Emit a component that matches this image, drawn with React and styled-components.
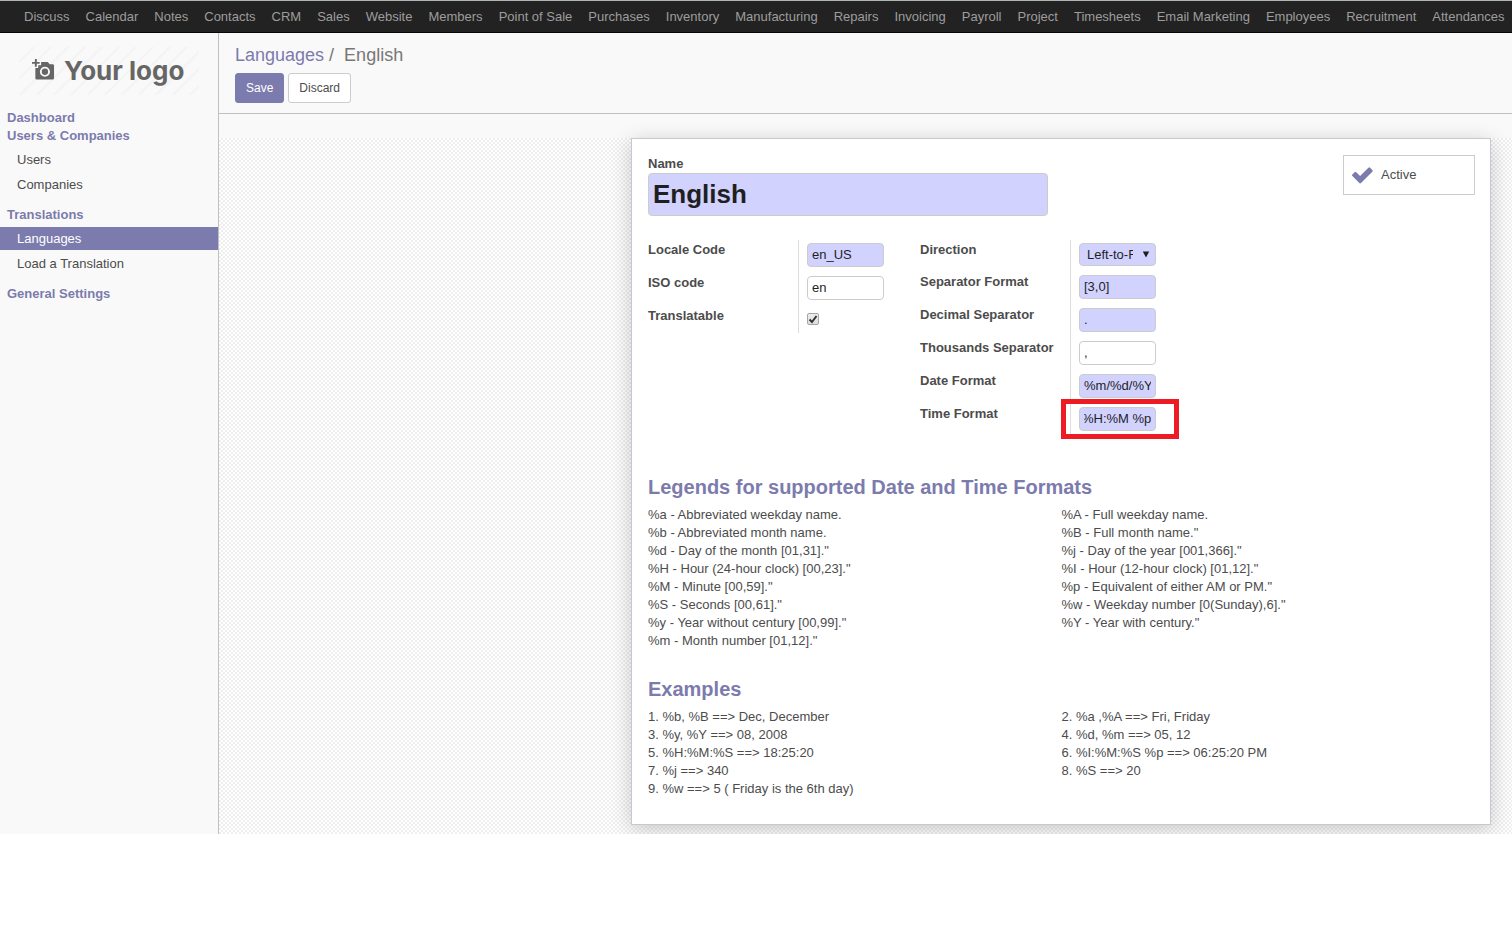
import { useEffect, useRef } from "react";
import styled, { createGlobalStyle } from "styled-components";

const GlobalStyle = createGlobalStyle`
  * {
    box-sizing: border-box;
  }
  body {
    margin: 0;
    background-color: white;
    color: #4c4c4c;
    font-family: "Liberation Sans", Arial, sans-serif;
    font-size: 13px;
    line-height: 18px;
  }
  input, select, button {
    font-family: inherit;
    font-size: 13px;
  }
  a {
    text-decoration: none;
  }
`;

const Navbar = styled.nav`
  display: flex;
  gap: 16px;
  height: 33px;
  padding: 7px 0 0 24px;
  overflow: hidden;
  border-top: 1px solid #afb5b2;
  border-bottom: 1px solid #080808;
  background-color: #222222;
`;

const NavLink = styled.a`
  color: #9d9d9d;
  white-space: nowrap;
`;

const Page = styled.div`
  display: flex;
  overflow: hidden;
  background-color: #f9f9f9;
`;

const Sidebar = styled.aside`
  flex: 0 0 219px;
  border-right: 1px solid #c0c0c0;
`;

const Logo = styled.a`
  display: flex;
  align-items: center;
  gap: 9px;
  width: 180px;
  height: 48px;
  margin: 14px 0 14px 19px;
  padding-left: 13px;
  color: #666666;
  background: repeating-linear-gradient(
    135deg,
    #f9f9f9 0px,
    #f9f9f9 9px,
    #f4f4f4 10px,
    #f4f4f4 12px
  );

  & > svg {
    margin-bottom: 2px;
  }
`;

const LogoText = styled.span`
  font-family: Inter, sans-serif;
  font-size: 26px;
  font-weight: bold;
  line-height: 32px;
  white-space: nowrap;
`;

const MenuTitle = styled.a`
  display: block;
  padding-left: 7px;
  color: #7c7bad;
  font-weight: bold;
`;

const MenuList = styled.ul`
  display: flex;
  flex-direction: column;
  gap: 2px;
  margin: 3px 0 10px;
  padding: 0;
  list-style: none;
`;

const MenuLink = styled.a`
  display: block;
  padding: 3px 0 2px 17px;
  color: ${(props) => (props.$active ? "white" : "#4c4c4c")};
  background-color: ${(props) => (props.$active ? "#7c7bad" : "transparent")};
`;

const Main = styled.main`
  flex: 1;
  min-width: 0;
`;

const ControlPanel = styled.header`
  padding: 11px 16px 10px;
  border-bottom: 1px solid #c0c0c0;
`;

const Breadcrumb = styled.div`
  display: flex;
  gap: 5px;
  margin-bottom: 7px;
  color: #777777;
  font-size: 18px;
  line-height: 22px;
`;

const Crumb = styled.a`
  color: #7c7bad;
`;

const CrumbCurrent = styled.span`
  padding-left: 5px;
`;

const Buttons = styled.div`
  display: flex;
  gap: 4px;
`;

const Button = styled.button`
  height: 30px;
  padding: 0 10px;
  border: 1px solid ${(props) => (props.$primary ? "#7c7bad" : "#cccccc")};
  border-radius: 3px;
  color: ${(props) => (props.$primary ? "white" : "#4c4c4c")};
  background-color: ${(props) => (props.$primary ? "#7c7bad" : "white")};
  font-size: 12px;
`;

const SheetArea = styled.div`
  display: flex;
  justify-content: flex-end;
  margin-top: 24px;
  padding: 0 21px 9px;
  background: repeating-conic-gradient(#eeeeee 0% 25%, white 0% 50%) 0 0 / 4px 4px;
`;

const Sheet = styled.form`
  width: 860px;
  padding: 16px 15px 26px 16px;
  border: 1px solid #c8c8d3;
  background-color: white;
  box-shadow: 0 4px 20px rgba(0, 0, 0, 0.2);
`;

const SheetHead = styled.div`
  display: flex;
  justify-content: space-between;
  align-items: flex-start;
  margin-bottom: 24px;
`;

const Label = styled.label`
  display: block;
  font-weight: bold;
`;

const Input = styled.input`
  display: block;
  width: 77px;
  height: 24px;
  padding: 0 4px 2px;
  border: 1px solid #cccccc;
  border-radius: 4px;
  color: #1f1f1f;
  background-color: ${(props) => (props.required ? "#d2d2ff" : "white")};
`;

const NameInput = styled(Input)`
  width: 400px;
  height: 43px;
  padding: 0 4px;
  font-size: 26px;
  font-weight: bold;
`;

const StatButton = styled.button`
  display: flex;
  align-items: center;
  gap: 8px;
  width: 132px;
  height: 40px;
  padding: 0 8px;
  border: 1px solid #cccccc;
  color: #4c4c4c;
  background-color: white;
`;

const StatText = styled.span`
  padding-bottom: 2px;
`;

const Groups = styled.div`
  display: flex;
  align-items: flex-start;
  gap: 36px;
  margin-bottom: 42px;
`;

const Group = styled.div`
  width: 236px;
`;

const Field = styled.div`
  display: grid;
  grid-template-columns: 150px 1fr;
  height: ${(props) => props.$height || 33}px;

  & > ${Label} {
    padding-top: 1px;
  }
`;

const Cell = styled.div`
  position: relative;
  padding: 3px 0 0 8px;
  border-left: 1px solid #dddddd;
`;

const SelectBox = styled.div`
  display: grid;
  width: 77px;
  align-items: center;

  & > * {
    grid-area: 1 / 1;
  }
  & > svg {
    justify-self: end;
    margin-right: 6px;
    pointer-events: none;
  }
`;

const Select = styled.select`
  appearance: none;
  width: 77px;
  height: 23px;
  padding: 0 22px 1px 7px;
  border: 1px solid #cccccc;
  border-radius: 4px;
  color: #1f1f1f;
  background-color: #d2d2ff;
`;

const CheckBox = styled.div`
  display: grid;
  width: 12px;
  padding-top: 4px;

  & > * {
    grid-area: 1 / 1;
  }
  & > svg {
    pointer-events: none;
  }
`;

const Checkbox = styled.input`
  appearance: none;
  width: 12px;
  height: 12px;
  margin: 0;
  border: 1px solid #a6a6a6;
  border-radius: 2px;
  background: linear-gradient(#ededed, #dedede);

  & + svg {
    visibility: hidden;
  }
  &:checked + svg {
    visibility: visible;
  }
`;

const Highlight = styled.div`
  position: absolute;
  top: -5px;
  left: -10px;
  width: 118px;
  height: 40px;
  border: 5px solid #ed1c24;
  pointer-events: none;
`;

const Title = styled.h2`
  margin: 0 0 8px;
  color: #7c7bad;
  font-size: 20px;
  line-height: 22px;
`;

const Columns = styled.div`
  display: grid;
  grid-template-columns: 1fr 1fr;
  margin-bottom: ${(props) => (props.$last ? 0 : 28)}px;
`;

const apps = [
  "Discuss",
  "Calendar",
  "Notes",
  "Contacts",
  "CRM",
  "Sales",
  "Website",
  "Members",
  "Point of Sale",
  "Purchases",
  "Inventory",
  "Manufacturing",
  "Repairs",
  "Invoicing",
  "Payroll",
  "Project",
  "Timesheets",
  "Email Marketing",
  "Employees",
  "Recruitment",
  "Attendances",
];

const legends = [
  [
    "%a - Abbreviated weekday name.",
    "%b - Abbreviated month name.",
    '%d - Day of the month [01,31]."',
    '%H - Hour (24-hour clock) [00,23]."',
    '%M - Minute [00,59]."',
    '%S - Seconds [00,61]."',
    '%y - Year without century [00,99]."',
    '%m - Month number [01,12]."',
  ],
  [
    "%A - Full weekday name.",
    '%B - Full month name."',
    '%j - Day of the year [001,366]."',
    '%I - Hour (12-hour clock) [01,12]."',
    '%p - Equivalent of either AM or PM."',
    '%w - Weekday number [0(Sunday),6]."',
    '%Y - Year with century."',
  ],
];

const examples = [
  [
    "1. %b, %B ==> Dec, December",
    "3. %y, %Y ==> 08, 2008",
    "5. %H:%M:%S ==> 18:25:20",
    "7. %j ==> 340",
    "9. %w ==> 5 ( Friday is the 6th day)",
  ],
  [
    "2. %a ,%A ==> Fri, Friday",
    "4. %d, %m ==> 05, 12",
    "6. %I:%M:%S %p ==> 06:25:20 PM",
    "8. %S ==> 20",
  ],
];

function CameraIcon() {
  return (
    <svg width="23" height="23" viewBox="0 0 24 24" fill="currentColor" aria-hidden="true">
      <path d="M3 0h2v3h3v2H5v3H3V5H0V3h3z" />
      <path
        fillRule="evenodd"
        d="M9.500 3h7l2 2.500h3A1.500 1.500 0 0 1 23 7V20a1.500 1.500 0 0 1-1.500 1.500H5A1.500 1.500 0 0 1 3.500 20V9.500h3V6.500h3zM13.500 8a5.300 5.300 0 1 0 0 10.600a5.300 5.300 0 1 0 0-10.600zM13.500 10a3.300 3.300 0 1 1 0 6.600a3.300 3.300 0 1 1 0-6.600z"
      />
    </svg>
  );
}

function CheckIcon() {
  return (
    <svg width="21" height="17" viewBox="0 0 21 17" fill="#7c7bad" aria-hidden="true">
      <path d="M4.200 5.300 8.100 9.100 16.400.8a1.200 1.200 0 0 1 1.700 0l2.200 2.200a1.200 1.200 0 0 1 0 1.700L9 16a1.200 1.200 0 0 1-1.700 0L.4 9.100a1.200 1.200 0 0 1 0-1.700l2.100-2.100a1.200 1.200 0 0 1 1.700 0z" />
    </svg>
  );
}

function TextField({ id, label, value, required, height, highlight }) {
  const ref = useRef(null);

  useEffect(() => {
    if (highlight) {
      ref.current.scrollLeft = ref.current.scrollWidth;
    }
  }, [highlight]);

  return (
    <Field $height={height}>
      <Label htmlFor={id}>{label}</Label>
      <Cell>
        <Input id={id} ref={ref} defaultValue={value} required={required} />
        {highlight && <Highlight />}
      </Cell>
    </Field>
  );
}

function TextColumns({ columns, last }) {
  return (
    <Columns $last={last}>
      {columns.map((lines, i) => (
        <div key={i}>
          {lines.map((line) => (
            <div key={line}>{line}</div>
          ))}
        </div>
      ))}
    </Columns>
  );
}

function App() {
  return (
    <>
      <GlobalStyle />
      <Navbar>
        {apps.map((app) => (
          <NavLink key={app} href="#">
            {app}
          </NavLink>
        ))}
      </Navbar>
      <Page>
        <Sidebar>
          <Logo href="#">
            <CameraIcon />
            <LogoText>Your logo</LogoText>
          </Logo>
          <MenuTitle href="#">Dashboard</MenuTitle>
          <MenuTitle href="#">Users &amp; Companies</MenuTitle>
          <MenuList>
            <li>
              <MenuLink href="#">Users</MenuLink>
            </li>
            <li>
              <MenuLink href="#">Companies</MenuLink>
            </li>
          </MenuList>
          <MenuTitle href="#">Translations</MenuTitle>
          <MenuList>
            <li>
              <MenuLink href="#" $active>
                Languages
              </MenuLink>
            </li>
            <li>
              <MenuLink href="#">Load a Translation</MenuLink>
            </li>
          </MenuList>
          <MenuTitle href="#">General Settings</MenuTitle>
        </Sidebar>
        <Main>
          <ControlPanel>
            <Breadcrumb>
              <Crumb href="#">Languages</Crumb>
              <span>/</span>
              <CrumbCurrent>English</CrumbCurrent>
            </Breadcrumb>
            <Buttons>
              <Button $primary>Save</Button>
              <Button>Discard</Button>
            </Buttons>
          </ControlPanel>
          <SheetArea>
            <Sheet>
              <SheetHead>
                <div>
                  <Label htmlFor="name">Name</Label>
                  <NameInput id="name" defaultValue="English" required />
                </div>
                <StatButton type="button">
                  <CheckIcon />
                  <StatText>Active</StatText>
                </StatButton>
              </SheetHead>
              <Groups>
                <Group>
                  <TextField id="code" label="Locale Code" value="en_US" required />
                  <TextField id="iso" label="ISO code" value="en" />
                  <Field $height={27}>
                    <Label htmlFor="translatable">Translatable</Label>
                    <Cell>
                      <CheckBox>
                        <Checkbox id="translatable" type="checkbox" defaultChecked />
                        <svg width="12" height="12" viewBox="0 0 12 12" aria-hidden="true">
                          <path d="M2.500 6.500 5 9 9.500 3" fill="none" stroke="#333333" strokeWidth="2" />
                        </svg>
                      </CheckBox>
                    </Cell>
                  </Field>
                </Group>
                <Group>
                  <Field $height={32}>
                    <Label htmlFor="direction">Direction</Label>
                    <Cell>
                      <SelectBox>
                        <Select id="direction" defaultValue="ltr">
                          <option value="ltr">Left-to-Right</option>
                          <option value="rtl">Right-to-Left</option>
                        </Select>
                        <svg width="8" height="7" viewBox="0 0 8 7" aria-hidden="true">
                          <path d="M.8.5h6.400L4 6.500z" fill="#1f1f1f" />
                        </svg>
                      </SelectBox>
                    </Cell>
                  </Field>
                  <TextField id="grouping" label="Separator Format" value="[3,0]" required />
                  <TextField id="decimal" label="Decimal Separator" value="." required />
                  <TextField id="thousands" label="Thousands Separator" value="," />
                  <TextField id="date" label="Date Format" value="%m/%d/%Y" required />
                  <TextField id="time" label="Time Format" value="%H:%M %p" required height={30} highlight />
                </Group>
              </Groups>
              <Title>Legends for supported Date and Time Formats</Title>
              <TextColumns columns={legends} />
              <Title>Examples</Title>
              <TextColumns columns={examples} last />
            </Sheet>
          </SheetArea>
        </Main>
      </Page>
    </>
  );
}

export default App;
